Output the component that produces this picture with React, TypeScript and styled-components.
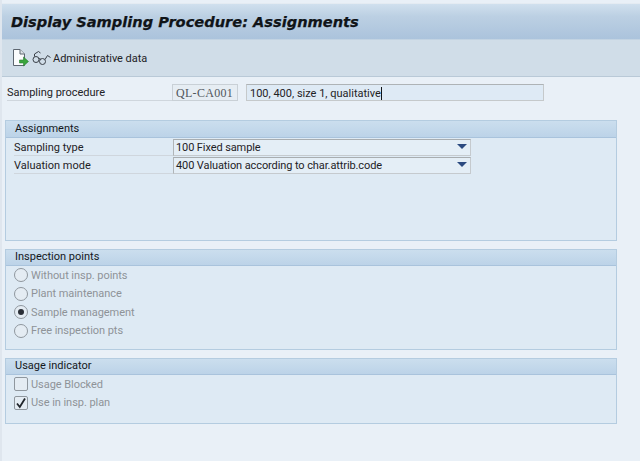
import React from "react";
import styled, { createGlobalStyle } from "styled-components";

const Global = createGlobalStyle`
  html, body { margin: 0; padding: 0; background: #e9f0f7; }
  body { font-family: Roboto, "Noto Sans", sans-serif; font-size: 11px; color: #1c1c1c; }
  * { box-sizing: border-box; }
`;

const Page = styled.div`
  width: 640px;
  height: 461px;
  overflow: hidden;
  display: flex;
  flex-direction: column;
  padding-top: 3px;
  background: #e9f0f7;
  border-left: 2px solid #dfe6ee;
`;

const TitleBar = styled.header`
  height: 37px;
  flex: none;
  padding-left: 9px;
  display: flex;
  align-items: center;
  background: linear-gradient(#d0e0ee 0%, #bcd0e3 35%, #abc3dc 100%);
  border-top: 1px solid #e4ebf2;
  border-bottom: 1px solid #c2d3e2;
`;

const Title = styled.h1`
  margin: 0;
  font-family: "DejaVu Sans", sans-serif;
  font-size: 14.6px;
  font-weight: 700;
  font-style: italic;
  -webkit-text-stroke: 0.25px #101418;
  color: #101418;
`;

const Toolbar = styled.div`
  height: 37px;
  flex: none;
  display: flex;
  align-items: center;
  padding-left: 10px;
  background: #d0dde8;
  border-bottom: 1px solid #b9c9d7;
`;

const ToolLabel = styled.span`
  font-size: 11px;
  letter-spacing: -0.05px;
  margin-left: 1px;
  color: #1e2226;
`;

const IconGap = styled.span`
  width: 3px;
`;

const HeaderRow = styled.div`
  height: 17px;
  margin-top: 7px;
  flex: none;
  display: flex;
  align-items: stretch;
  padding-left: 5px;
`;

const FieldLabel = styled.label<{ $width: number }>`
  width: ${(p) => p.$width}px;
  flex: none;
  font-size: 11px;
  line-height: 18px;
  color: #1e2226;
  border-bottom: 1px solid #cfd6dd;
`;

const CodeBox = styled.div`
  width: 66px;
  flex: none;
  font-family: "Liberation Serif", serif;
  font-size: 12px;
  letter-spacing: 0.3px;
  line-height: 16px;
  padding-left: 3px;
  color: #50565c;
  background: #e6edf3;
  border: 1px solid #c9d0d6;
`;

const TextBox = styled.div`
  width: 298px;
  margin-left: 8px;
  flex: none;
  display: flex;
  align-items: center;
  padding: 1px 0 0 3px;
  font-size: 11px;
  color: #1e2226;
  background: #deeaf5;
  border: 1px solid #c5c9cb;
  border-top-color: #aeb3b6;
`;

const Caret = styled.span`
  width: 1px;
  height: 13px;
  background: #101418;
`;

const Panels = styled.main`
  margin-top: 19px;
  margin-left: 3px;
  width: 612px;
  display: flex;
  flex-direction: column;
  gap: 8px;
`;

const Panel = styled.section<{ $height: number }>`
  height: ${(p) => p.$height}px;
  background: #deeaf4;
  border: 1px solid #b4cce0;
  display: flex;
  flex-direction: column;
`;

const PanelTitle = styled.div<{ $height: number }>`
  height: ${(p) => p.$height}px;
  flex: none;
  padding-left: 9px;
  font-size: 11px;
  line-height: ${(p) => p.$height - 2}px;
  color: #14181c;
  background: linear-gradient(#cbdeee, #bcd3e8);
  border-bottom: 1px solid #a9c3dc;
`;

const SelectList = styled.div`
  padding: 1px 0 0 8px;
  display: flex;
  flex-direction: column;
  gap: 1px;
`;

const SelectRow = styled.div`
  display: flex;
  height: 17px;
`;

const SelectBox = styled.div`
  width: 298px;
  flex: none;
  display: flex;
  align-items: center;
  justify-content: space-between;
  padding: 0 3px 0 2px;
  font-size: 11px;
  letter-spacing: -0.1px;
  color: #1e2226;
  background: #e4eef6;
  border: 1px solid #c5cace;
  border-top-color: #a8adb0;
  border-left-color: #b0b5b8;
`;

const Arrow = styled.span`
  width: 0;
  height: 0;
  margin-bottom: 2px;
  border-left: 5px solid transparent;
  border-right: 5px solid transparent;
  border-top: 5px solid #2b4a80;
`;

const OptionList = styled.div`
  padding: 1px 0 0 8px;
  display: flex;
  flex-direction: column;
  gap: 2.5px;
`;

const OptionRow = styled.div`
  height: 16px;
  display: flex;
  align-items: center;
  gap: 3px;
  font-size: 11px;
  letter-spacing: -0.05px;
  color: #8e9398;
`;

const Radio = styled.span<{ $on?: boolean }>`
  width: 14px;
  height: 14px;
  flex: none;
  border-radius: 50%;
  border: 1px solid #8f979e;
  background: #e4ecf3;
  display: flex;
  align-items: center;
  justify-content: center;
  &::after {
    content: "";
    width: 6px;
    height: 6px;
    border-radius: 50%;
    background: ${(p) => (p.$on ? "#2a2f36" : "transparent")};
  }
`;

const Check = styled.span`
  width: 14px;
  height: 14px;
  flex: none;
  border-radius: 2px;
  border: 1px solid #8f979e;
  background: #e4ecf3;
  display: flex;
  align-items: center;
  justify-content: center;
`;

const DocIcon = () => (
  <svg width="17" height="20" viewBox="0 0 17 20">
    <path d="M1.5 1.5H8L12.5 6V17.5H1.5Z" fill="#fbfcfd" stroke="#5d6670" />
    <path d="M8 1.5V6H12.5" fill="#dfe4e9" stroke="#5d6670" />
    <path d="M7.5 12H11.5V9L16.5 13.5L11.5 18V15H7.5Z" fill="#3aa53c" stroke="#2c7e36" strokeWidth="0.6" />
  </svg>
);

const GlassesIcon = () => (
  <svg width="20" height="16" viewBox="0 0 20 16" fill="none" stroke="#3a4048" strokeWidth="1">
    <circle cx="4" cy="9.5" r="3" />
    <circle cx="10.5" cy="11.5" r="3" />
    <path d="M6.8 8.6C7.8 8.6 8.5 9 8.9 9.4" />
    <path d="M2.5 6.5L2.5 4L6.5 1.5L8.5 3" />
    <path d="M13 9.5L15.5 5.5L18.5 7.5" />
  </svg>
);

const App = () => (
  <Page>
    <Global />
    <TitleBar>
      <Title>Display Sampling Procedure: Assignments</Title>
    </TitleBar>
    <Toolbar>
      <DocIcon />
      <IconGap />
      <GlassesIcon />
      <ToolLabel>Administrative data</ToolLabel>
    </Toolbar>
    <HeaderRow>
      <FieldLabel $width={165}>Sampling procedure</FieldLabel>
      <CodeBox>QL-CA001</CodeBox>
      <TextBox>
        100, 400, size 1, qualitative
        <Caret />
      </TextBox>
    </HeaderRow>
    <Panels>
      <Panel $height={121}>
        <PanelTitle $height={17}>Assignments</PanelTitle>
        <SelectList>
          <SelectRow>
            <FieldLabel $width={159}>Sampling type</FieldLabel>
            <SelectBox>
              100 Fixed sample
              <Arrow />
            </SelectBox>
          </SelectRow>
          <SelectRow>
            <FieldLabel $width={159}>Valuation mode</FieldLabel>
            <SelectBox>
              400 Valuation according to char.attrib.code
              <Arrow />
            </SelectBox>
          </SelectRow>
        </SelectList>
      </Panel>
      <Panel $height={101}>
        <PanelTitle $height={16}>Inspection points</PanelTitle>
        <OptionList>
          <OptionRow>
            <Radio />
            Without insp. points
          </OptionRow>
          <OptionRow>
            <Radio />
            Plant maintenance
          </OptionRow>
          <OptionRow>
            <Radio $on />
            Sample management
          </OptionRow>
          <OptionRow>
            <Radio />
            Free inspection pts
          </OptionRow>
        </OptionList>
      </Panel>
      <Panel $height={66}>
        <PanelTitle $height={16}>Usage indicator</PanelTitle>
        <OptionList>
          <OptionRow>
            <Check />
            Usage Blocked
          </OptionRow>
          <OptionRow>
            <Check>
              <svg width="12" height="12" viewBox="0 0 12 12" fill="none" stroke="#20252b" strokeWidth="1.8">
                <path d="M2 6.5L4.8 10L10 1.5" />
              </svg>
            </Check>
            Use in insp. plan
          </OptionRow>
        </OptionList>
      </Panel>
    </Panels>
  </Page>
);

export default App;
